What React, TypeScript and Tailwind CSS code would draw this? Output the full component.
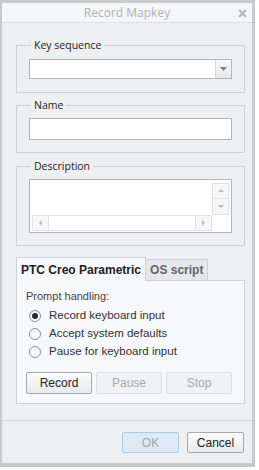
import React from "react";

const Radio = ({ checked, label }: { checked?: boolean; label: string }) => (
  <div className="flex items-center h-[18px]">
    <span className="ml-[3px] w-[12px] h-[12px] rounded-full border border-[#8e8f91] bg-gradient-to-b from-[#f2f2f2] to-[#ffffff] flex items-center justify-center">
      {checked && <span className="w-[6px] h-[6px] rounded-full bg-[#2b2b2b]" />}
    </span>
    <span className="ml-[8px] text-[11.5px] text-[#333]">{label}</span>
  </div>
);

const Btn = ({ label, disabled }: { label: string; disabled?: boolean }) => (
  <button
    className={`w-[66px] h-[22px] rounded-[2px] border text-[12px] ${
      disabled
        ? "border-[#dcdde0] bg-[#f1f2f3] text-[#a9abae]"
        : "border-[#a8aaad] bg-gradient-to-b from-[#fbfbfb] to-[#e9eaeb] text-[#222]"
    }`}
  >
    {label}
  </button>
);

const Arrow = ({ dir }: { dir: "up" | "down" | "left" | "right" }) => {
  const pts = {
    up: "1,5 4,2 7,5",
    down: "1,2 4,5 7,2",
    left: "5,1 2,4 5,7",
    right: "2,1 5,4 2,7",
  }[dir];
  return (
    <svg width="8" height="8" viewBox="0 0 8 8">
      <polygon points={pts} fill="#b9bbbd" />
    </svg>
  );
};

export default function App() {
  return (
    <div className="w-[259px] h-[470px] bg-white" style={{ fontFamily: '"Liberation Sans", Arial, sans-serif' }}>
      <div className="w-[255px] h-[467px] border-l-2 border-r-[3px] border-t-[3px] border-b-4 border-[#c8cacc] bg-[#eeeff1] flex flex-col">
        {/* title */}
        <div className="h-[20px] bg-[#f5f6f7] border-b border-[#dcdee0] flex items-center justify-center relative">
          <div className="text-[12px] text-[#afb1b4]" style={{ fontFamily: '"Open Sans", sans-serif' }}>
            Record Mapkey
          </div>
          <svg className="absolute right-[5px] top-[6px]" width="9" height="9" viewBox="0 0 9 9">
            <path d="M1 1 L8 8 M8 1 L1 8" stroke="#b3b5b8" strokeWidth="2" />
          </svg>
        </div>

        <div className="pl-[14px] pr-[7px]" style={{ fontFamily: '"Open Sans", sans-serif' }}>
          {/* Key sequence */}
          <fieldset className="mt-[15px] border border-[#cfd1d4] px-[12px] pt-[7px] pb-[13px]">
            <legend className="ml-[2px] px-[3px] text-[10.5px] leading-[14px] font-medium text-[#222]">Key sequence</legend>
            <div className="h-[20px] bg-white border border-[#b4b6b9] flex">
              <div className="flex-1" />
              <div className="w-[16px] border-l border-[#d6d7d9] bg-gradient-to-b from-[#f8f8f8] to-[#e8e9ea] flex items-center justify-center">
                <svg width="7" height="4" viewBox="0 0 7 4">
                  <polygon points="0,0 7,0 3.5,4" fill="#7d7f82" />
                </svg>
              </div>
            </div>
          </fieldset>

          {/* Name */}
          <fieldset className="mt-[5px] border border-[#cfd1d4] px-[12px] pt-[6px] pb-[12px]">
            <legend className="ml-[2px] px-[3px] text-[10.5px] leading-[14px] font-medium text-[#222]">Name</legend>
            <div className="h-[22px] bg-white border border-[#b4b6b9]" />
          </fieldset>

          {/* Description */}
          <fieldset className="mt-[6px] border border-[#cfd1d4] px-[12px] pt-[6px] pb-[12px]">
            <legend className="ml-[2px] px-[3px] text-[10.5px] leading-[14px] font-medium text-[#222]">Description</legend>
            <div className="h-[54px] bg-white border border-[#b4b6b9] flex flex-col p-[1px]">
              <div className="flex flex-1">
                <div className="flex-1" />
                <div className="w-[18px] flex flex-col pt-[2px] pr-[1px]">
                  <div className="h-[16px] border border-[#e1e2e4] bg-[#f7f7f8] flex items-center justify-center">
                    <Arrow dir="up" />
                  </div>
                  <div className="h-[16px] border border-t-0 border-[#e1e2e4] bg-[#f7f7f8] flex items-center justify-center">
                    <Arrow dir="down" />
                  </div>
                </div>
              </div>
              <div className="h-[18px] flex">
                <div className="flex-1 flex border border-[#e1e2e4] ml-[1px]">
                  <div className="w-[16px] border-r border-[#e1e2e4] bg-[#f7f7f8] flex items-center justify-center">
                    <Arrow dir="left" />
                  </div>
                  <div className="flex-1" />
                  <div className="w-[16px] border-l border-[#e1e2e4] bg-[#f7f7f8] flex items-center justify-center">
                    <Arrow dir="right" />
                  </div>
                </div>
                <div className="w-[18px]" />
              </div>
            </div>
          </fieldset>

          {/* Tabs */}
          <div className="mt-[11px]">
            <div className="flex items-end h-[23px]" style={{ fontFamily: '"Liberation Sans", Arial, sans-serif' }}>
              <div className="h-[24px] -mb-px px-[4px] border border-b-0 border-[#cfd1d4] bg-[#f7f8f9] text-[12px] font-bold text-[#222] flex items-center z-10">
                PTC Creo Parametric
              </div>
              <div className="h-[21px] px-[4px] border border-l-0 border-b-0 border-[#cfd1d4] bg-[#e6e7e9] text-[12px] font-bold text-[#666] flex items-center">
                OS script
              </div>
            </div>
            <div className="h-[124px] border border-[#cfd1d4] bg-[#f7f8f9] px-[9px] pt-[8px]" style={{ fontFamily: '"Liberation Sans", Arial, sans-serif' }}>
              <div className="text-[11px] text-[#444] leading-[14px]">Prompt handling:</div>
              <div className="mt-[4px] flex flex-col">
                <Radio checked label="Record keyboard input" />
                <Radio label="Accept system defaults" />
                <Radio label="Pause for keyboard input" />
              </div>
              <div className="mt-[11px] flex gap-[4px]">
                <Btn label="Record" />
                <Btn label="Pause" disabled />
                <Btn label="Stop" disabled />
              </div>
            </div>
          </div>
        </div>

        {/* footer */}
        <div className="mt-auto border-t border-[#d5d7da] h-[43px] flex items-start justify-end gap-[8px] pr-[8px] pt-[11px]" style={{ fontFamily: '"Liberation Sans", Arial, sans-serif' }}>
          <button className="w-[57px] h-[21px] rounded-[2px] border border-[#a9cbe6] bg-[#dcebf7] text-[12px] text-[#9ea3a8]">OK</button>
          <button className="w-[57px] h-[21px] rounded-[2px] border border-[#a8aaad] bg-gradient-to-b from-[#fbfbfb] to-[#e9eaeb] text-[12px] text-[#222]">Cancel</button>
        </div>
      </div>
    </div>
  );
}
